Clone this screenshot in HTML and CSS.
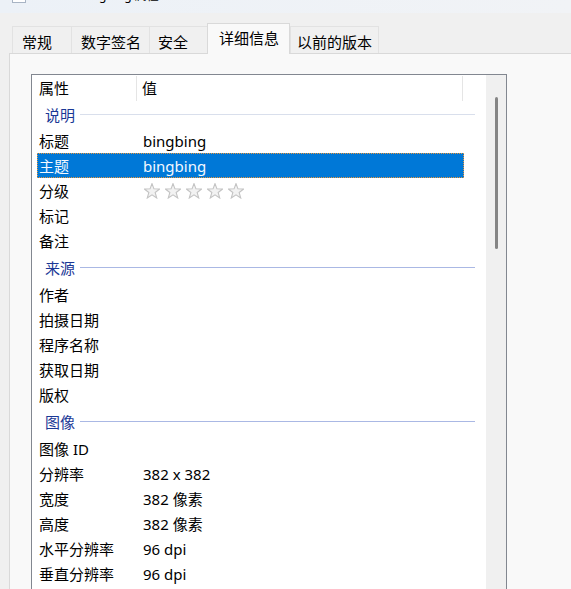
FILE: index.html
```html
<!DOCTYPE html>
<html lang="zh-CN">
<head>
<meta charset="utf-8">
<title>属性</title>
<link rel="stylesheet" href="styles.css">
</head>
<body>
<div class="titlebar">
  <span class="ticon"></span>
  <span class="ttext">bingbing 属性</span>
</div>
<div class="tabs">
  <div class="tab t1">常规</div>
  <div class="tab t2">数字签名</div>
  <div class="tab t3">安全</div>
  <div class="tab t4 active">详细信息</div>
  <div class="tab t5">以前的版本</div>
</div>
<div class="panel">
  <div class="listbox">
    <div class="listarea">
      <div class="header">
        <div class="hcol hc1">属性</div>
        <div class="hcol hc2">值</div>
      </div>
      <div class="group first"><span class="glabel">说明</span><span class="gline"></span></div>
      <div class="row"><span class="k">标题</span><span class="v">bingbing</span></div>
      <div class="row selected"><span class="k">主题</span><span class="v">bingbing</span></div>
      <div class="row"><span class="k">分级</span><span class="v stars">
        <svg class="star" viewBox="0 0 16 16"><polygon points="8,0.6 9.94,5.83 15.6,6.03 11.14,9.52 12.7,14.97 8,11.8 3.3,14.97 4.86,9.52 0.4,6.03 6.06,5.83"/></svg>
        <svg class="star" viewBox="0 0 16 16"><polygon points="8,0.6 9.94,5.83 15.6,6.03 11.14,9.52 12.7,14.97 8,11.8 3.3,14.97 4.86,9.52 0.4,6.03 6.06,5.83"/></svg>
        <svg class="star" viewBox="0 0 16 16"><polygon points="8,0.6 9.94,5.83 15.6,6.03 11.14,9.52 12.7,14.97 8,11.8 3.3,14.97 4.86,9.52 0.4,6.03 6.06,5.83"/></svg>
        <svg class="star" viewBox="0 0 16 16"><polygon points="8,0.6 9.94,5.83 15.6,6.03 11.14,9.52 12.7,14.97 8,11.8 3.3,14.97 4.86,9.52 0.4,6.03 6.06,5.83"/></svg>
        <svg class="star" viewBox="0 0 16 16"><polygon points="8,0.6 9.94,5.83 15.6,6.03 11.14,9.52 12.7,14.97 8,11.8 3.3,14.97 4.86,9.52 0.4,6.03 6.06,5.83"/></svg>
      </span></div>
      <div class="row"><span class="k">标记</span><span class="v"></span></div>
      <div class="row"><span class="k">备注</span><span class="v"></span></div>
      <div class="group"><span class="glabel">来源</span><span class="gline"></span></div>
      <div class="row"><span class="k">作者</span><span class="v"></span></div>
      <div class="row"><span class="k">拍摄日期</span><span class="v"></span></div>
      <div class="row"><span class="k">程序名称</span><span class="v"></span></div>
      <div class="row"><span class="k">获取日期</span><span class="v"></span></div>
      <div class="row"><span class="k">版权</span><span class="v"></span></div>
      <div class="group"><span class="glabel">图像</span><span class="gline"></span></div>
      <div class="row"><span class="k">图像 ID</span><span class="v"></span></div>
      <div class="row"><span class="k">分辨率</span><span class="v">382 x 382</span></div>
      <div class="row"><span class="k">宽度</span><span class="v">382 像素</span></div>
      <div class="row"><span class="k">高度</span><span class="v">382 像素</span></div>
      <div class="row"><span class="k">水平分辨率</span><span class="v">96 dpi</span></div>
      <div class="row"><span class="k">垂直分辨率</span><span class="v">96 dpi</span></div>
    </div>
    <div class="scrollbar"><div class="thumb"></div></div>
  </div>
</div>
</body>
</html>
```
FILE: styles.css
```css
html, body {
  margin: 0;
  padding: 0;
  height: 100%;
  overflow: hidden;
}
body {
  background: #f0f0f0;
  font-family: "Noto Sans", "Noto Sans CJK SC", sans-serif;
  font-size: 15px;
  color: #000;
}
.titlebar {
  height: 13px;
  background: linear-gradient(90deg, #ecf1f7, #f1f3f6);
  overflow: hidden;
  display: flex;
  align-items: flex-start;
}
.ticon {
  width: 12px;
  height: 2px;
  margin-left: 12px;
  border: 1px solid #a8b4c4;
  border-top: none;
  background: #fff;
}
.ttext {
  margin-left: 55px;
  font-size: 12px;
  line-height: 16px;
  margin-top: -12px;
  color: #000;
}
.tabs {
  display: flex;
  align-items: flex-end;
  margin-top: 10px;
  padding-left: 12px;
  height: 30px;
  position: relative;
  z-index: 1;
}
.tab {
  box-sizing: border-box;
  height: 27px;
  padding-top: 5px;
  line-height: 20px;
  border: 1px solid #e2e2e2;
  border-bottom: none;
  border-right: none;
  background: #f0f0f0;
  white-space: nowrap;
}
.t1 { width: 59px; padding-left: 9px; }
.t2 { width: 78px; padding-left: 9px; }
.t3 { width: 58px; padding-left: 8px; }
.t4 { width: 83px; padding-left: 11px; }
.t5 { width: 89px; padding-left: 6px; border-right: 1px solid #e2e2e2; }
.tab.active {
  height: 31px;
  margin-bottom: -1px;
  padding-top: 4px;
  background: #f9f9f9;
  border: 1px solid #d9d9d9;
  border-bottom: none;
}
.panel {
  margin-left: 9px;
  border-left: 1px solid #d9d9d9;
  border-top: 1px solid #d9d9d9;
  background: #f9f9f9;
  height: 600px;
  padding-top: 20px;
  padding-left: 21px;
}
.listbox {
  width: 474px;
  height: 600px;
  border: 1px solid #828790;
  background: #fff;
  display: flex;
}
.listarea {
  width: 454px;
}
.header {
  display: flex;
  height: 26px;
  padding-top: 1px;
  box-sizing: border-box;
}
.hcol {
  line-height: 25px;
  border-right: 1px solid #e5e5e5;
  box-sizing: border-box;
}
.hc1 { width: 105px; padding-left: 7px; }
.hc2 { width: 326px; padding-left: 5px; }
.group {
  display: flex;
  align-items: center;
  height: 29px;
  padding-left: 13px;
  padding-right: 11px;
}
.group.first { height: 27px; }
.glabel {
  color: #1a3896;
  margin-right: 5px;
  line-height: 20px;
}
.gline {
  flex: 1;
  height: 1px;
  background: #aab8e4;
}
.group.first .gline { background: #d9dfec; }
.row {
  display: flex;
  align-items: center;
  height: 25px;
  margin-left: 5px;
  width: 427px;
  box-sizing: border-box;
  border: 1px solid transparent;
}
.row .k {
  width: 104px;
  padding-left: 1px;
  line-height: 20px;
  white-space: nowrap;
}
.row .v {
  line-height: 20px;
  white-space: nowrap;
}
.row.selected {
  background: #0078d7;
  border: 1px dotted #e8963c;
  color: #f4f8ff;
}
.stars {
  display: flex;
  gap: 5px;
  padding-left: 1px;
}
.star {
  width: 16px;
  height: 16px;
  display: block;
}
.star polygon {
  fill: #f2f2f2;
  stroke: #c3c3c3;
  stroke-width: 1.1;
  stroke-linejoin: miter;
}
.scrollbar {
  width: 20px;
  background: #f0f0f0;
  display: flex;
  justify-content: center;
  padding-top: 22px;
  box-sizing: border-box;
}
.thumb {
  width: 3px;
  height: 152px;
  background: #858585;
  border-radius: 2px;
}
```
